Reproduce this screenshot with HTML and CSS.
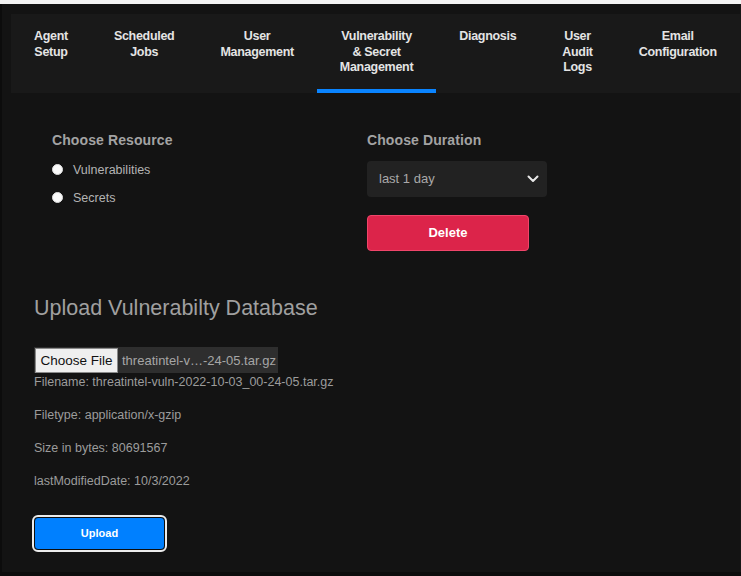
FILE: index.html
```html
<!DOCTYPE html>
<html lang="en">
<head>
<meta charset="utf-8">
<title>Settings</title>
<link rel="stylesheet" href="styles.css">
</head>
<body>
<div class="topbar"></div>
<div class="app">
  <div class="main">
    <nav class="tabs">
      <div class="tab"><span class="tab-label">Agent Setup</span></div>
      <div class="tab"><span class="tab-label">Scheduled Jobs</span></div>
      <div class="tab"><span class="tab-label">User Management</span></div>
      <div class="tab active"><span class="tab-label">Vulnerability &amp; Secret Management</span></div>
      <div class="tab"><span class="tab-label">Diagnosis</span></div>
      <div class="tab"><span class="tab-label">User Audit Logs</span></div>
      <div class="tab"><span class="tab-label">Email Configuration</span></div>
    </nav>

    <section class="filters">
      <div class="col col-resource">
        <div class="field-label">Choose Resource</div>
        <label class="radio-row"><span class="radio"></span><span>Vulnerabilities</span></label>
        <label class="radio-row"><span class="radio"></span><span>Secrets</span></label>
      </div>
      <div class="col col-duration">
        <div class="field-label">Choose Duration</div>
        <div class="select">
          <span>last 1 day</span>
          <svg class="chevron" width="12" height="8" viewBox="0 0 12 8"><polyline points="1.5,1.5 6,6 10.5,1.5" fill="none" stroke="#e8e8e8" stroke-width="2" stroke-linecap="round" stroke-linejoin="round"/></svg>
        </div>
        <button class="btn-delete">Delete</button>
      </div>
    </section>

    <section class="upload">
      <h2 class="upload-title">Upload Vulnerabilty Database</h2>
      <div class="file-input"><span class="file-btn">Choose File</span><span class="file-name">threatintel-v…-24-05.tar.gz</span></div>
      <p class="meta first">Filename: threatintel-vuln-2022-10-03_00-24-05.tar.gz</p>
      <p class="meta">Filetype: application/x-gzip</p>
      <p class="meta">Size in bytes: 80691567</p>
      <p class="meta">lastModifiedDate: 10/3/2022</p>
      <button class="btn-upload">Upload</button>
    </section>
  </div>
  <div class="gutter"></div>
</div>
</body>
</html>
```

FILE: styles.css
```css
html, body {
  margin: 0;
  padding: 0;
  background: #0c0c0c;
  font-family: "Liberation Sans", Arial, sans-serif;
  overflow: hidden;
}

.topbar {
  height: 4px;
  background: #f3f3f3;
}

.app {
  display: flex;
  margin-left: 2px;
  height: 568px;
  background: #131313;
}

.main {
  flex: 1;
  padding: 10px 0 0 9px;
}

.gutter {
  width: 7px;
  background: #171717;
}

/* Tabs */
.tabs {
  display: flex;
  background: #191919;
}

.tab {
  padding: 15px 23px 13px;
  border-bottom: 4px solid transparent;
  color: #e4e4e4;
  font-size: 12.5px;
  font-weight: bold;
  line-height: 15.5px;
  text-align: center;
  letter-spacing: -0.3px;
}

.tab-label {
  display: block;
  width: min-content;
  margin: 0 auto;
}

.tab.active {
  border-bottom-color: #0a84ff;
}

/* Filters */
.filters {
  display: flex;
  padding: 39px 0 0 41px;
}

.col-resource {
  width: 315px;
}

.field-label {
  font-size: 14px;
  font-weight: bold;
  line-height: 16px;
  color: #a3a3a3;
  letter-spacing: 0.1px;
}

.radio-row {
  display: flex;
  align-items: center;
  height: 28px;
  gap: 10px;
  font-size: 12.5px;
  color: #b3b3b3;
}

.col-resource .field-label {
  margin-bottom: 8px;
}

.radio {
  width: 11px;
  height: 11px;
  border-radius: 50%;
  background: #fafafa;
  box-sizing: border-box;
  border: 1px solid #dedede;
}

.select {
  margin-top: 13px;
  width: 180px;
  height: 36px;
  box-sizing: border-box;
  background: #222222;
  border-radius: 4px;
  padding: 0 8px 0 12px;
  display: flex;
  align-items: center;
  justify-content: space-between;
  font-size: 13px;
  color: #a9a9a9;
}

.btn-delete {
  display: block;
  margin-top: 18px;
  width: 162px;
  height: 36px;
  background: #dc244a;
  border: 1px solid #f0456a;
  border-radius: 4px;
  color: #ffffff;
  font-family: "Liberation Sans", Arial, sans-serif;
  font-size: 13px;
  font-weight: bold;
}

/* Upload */
.upload {
  padding-left: 23px;
}

.upload-title {
  margin: 44px 0 0;
  font-size: 21.5px;
  line-height: 26px;
  font-weight: normal;
  color: #a0a0a0;
}

.file-input {
  margin-top: 26px;
  display: inline-flex;
  align-items: stretch;
  width: 244px;
  height: 26px;
  background: #2e2e2e;
  box-sizing: border-box;
  padding: 1px 0 0 1px;
}

.file-btn {
  display: flex;
  align-items: center;
  justify-content: center;
  width: 83px;
  box-sizing: border-box;
  background: #efefef;
  border: 1px solid #8a8a8a;
  color: #111;
  font-size: 13.5px;
}

.file-name {
  display: flex;
  align-items: center;
  padding-left: 4px;
  font-size: 13px;
  color: #a6a6a6;
  white-space: nowrap;
}

.meta {
  margin: 17px 0 0;
  font-size: 12.5px;
  line-height: 16px;
  color: #9c9c9c;
}

.meta.first {
  margin-top: 1px;
}

.btn-upload {
  display: block;
  margin-top: 28px;
  width: 131px;
  height: 33px;
  background: #0080ff;
  border: 1px solid #0d0d0d;
  border-radius: 4px;
  outline: 2px solid #ececec;
  outline-offset: 0;
  color: #ffffff;
  font-family: "Liberation Sans", Arial, sans-serif;
  font-size: 11px;
  font-weight: bold;
}
```
